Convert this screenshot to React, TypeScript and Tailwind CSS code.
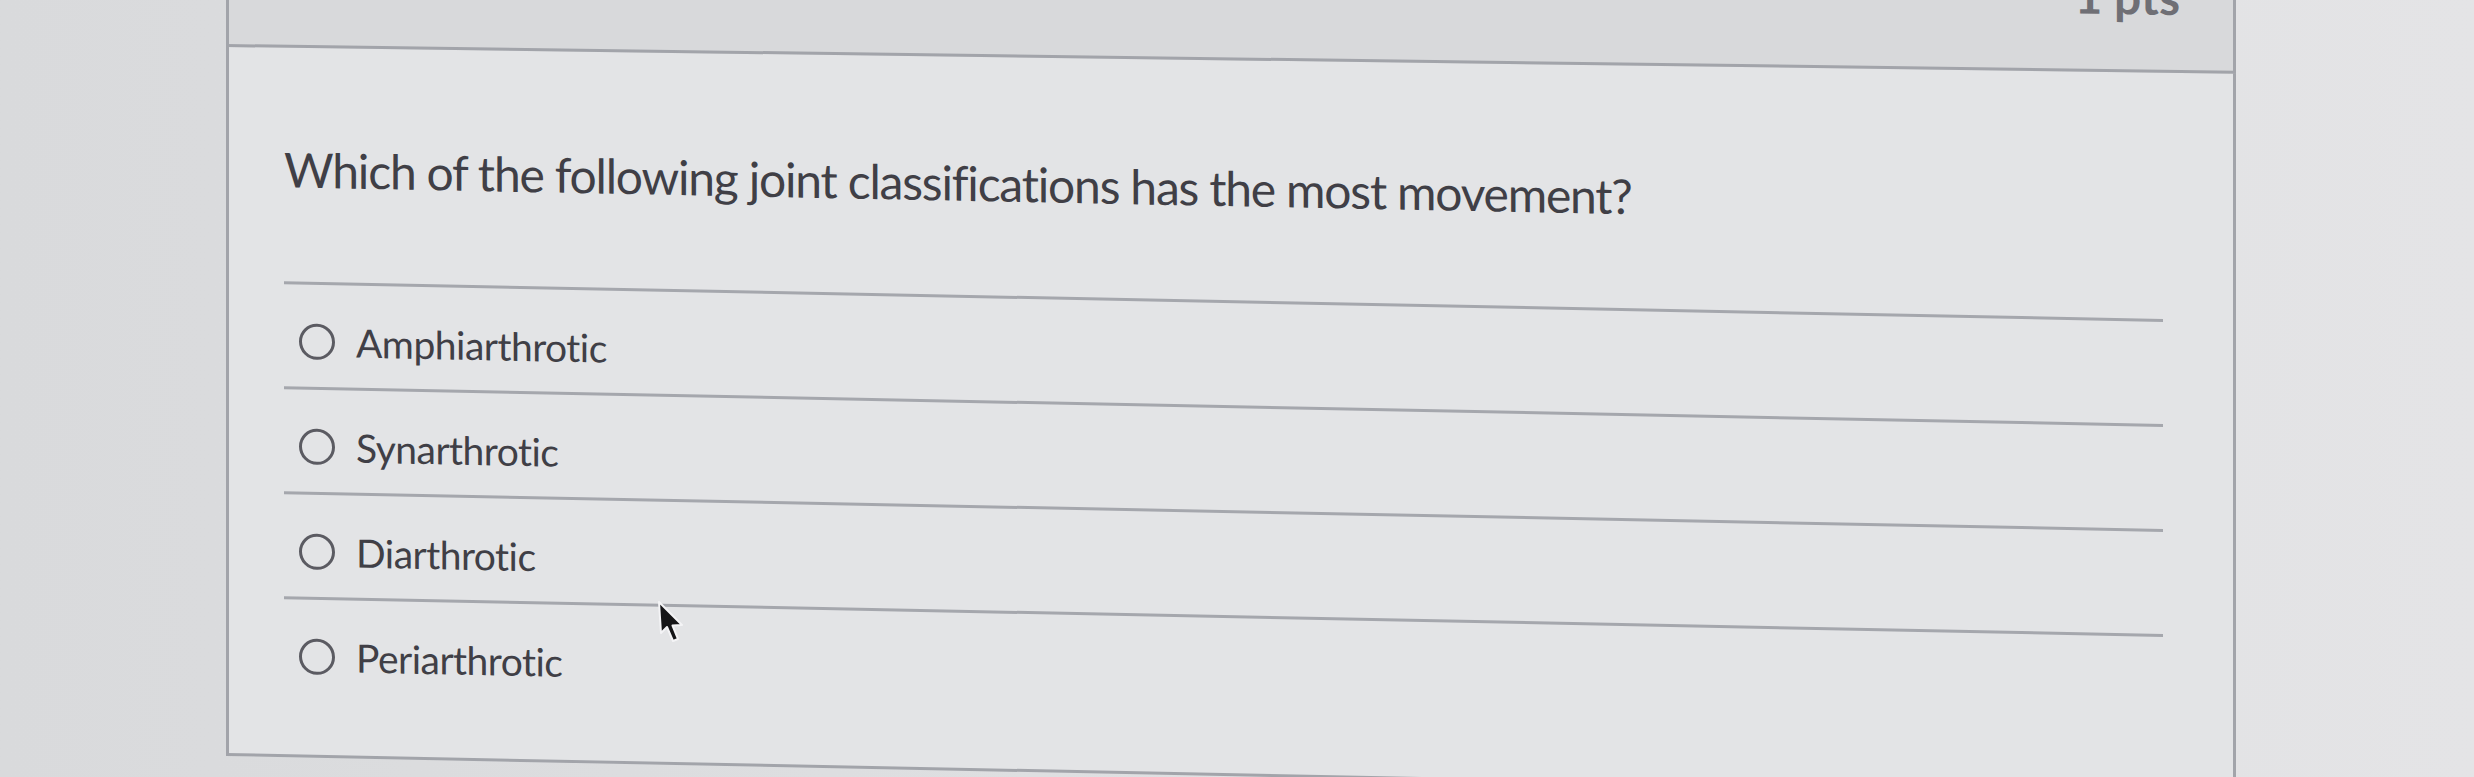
import React from "react";

const options = ["Amphiarthrotic", "Synarthrotic", "Diarthrotic", "Periarthrotic"];

function Radio() {
  return (
    <span className="ml-[15px] h-[36px] w-[36px] shrink-0 rounded-full border-[3px] border-[#5b5b62]" />
  );
}

function Cursor() {
  return (
    <svg className="absolute left-[656px] top-[599px] h-[46px] w-[30px]" viewBox="0 0 30 46" aria-hidden>
      <path
        d="M3 3 L5 34 L11 28 L17 42 L22 40 L16.5 26.5 L26 26 Z"
        fill="#151517"
        stroke="#f4f4f6"
        strokeWidth="2"
        strokeLinejoin="round"
      />
    </svg>
  );
}

export default function App() {
  return (
    <div
      className="relative h-[777px] w-[2474px] overflow-hidden bg-gradient-to-r from-[#d9dadc] via-[#dfe0e2] to-[#e4e4e6] pl-[226px]"
      style={{ fontFamily: "Lato, 'Noto Sans', sans-serif" }}
    >
      {/* quiz card; header and body skewed a little differently to follow the photo's perspective */}
      <div className="-mt-[40px] flex w-[2010px] flex-col">
        <div className="relative z-10 flex h-[87px] origin-left skew-y-[0.76deg] items-start justify-end border-x-[3px] border-b-[3px] border-[#a2a4aa] bg-[#d8d9db] pr-[53px]">
          <span className="-mt-[13px] text-[48px] font-bold leading-none text-[#6f6f75]">1 pts</span>
        </div>

        <div className="-mt-[40px] flex h-[749px] origin-left skew-y-[1.15deg] flex-col border-x-[3px] border-b-[3px] border-[#a2a4aa] bg-[#e3e4e6] pl-[55px] pr-[70px] pt-[40px]">
          <p className="mt-[97px] text-[48px] leading-none tracking-[-1.2px] text-[#403f46]">
            Which of the following joint classifications has the most movement?
          </p>

          <ul className="mt-[88px] flex flex-col">
            {options.map((o) => (
              <li
                key={o}
                className="flex h-[105px] items-center gap-[21px] border-t-[3px] border-[#a5a7ad] pt-[12px]"
              >
                <Radio />
                <span className="text-[39px] leading-none tracking-[-0.5px] text-[#403f46]">{o}</span>
              </li>
            ))}
          </ul>
        </div>
      </div>

      <Cursor />
    </div>
  );
}
